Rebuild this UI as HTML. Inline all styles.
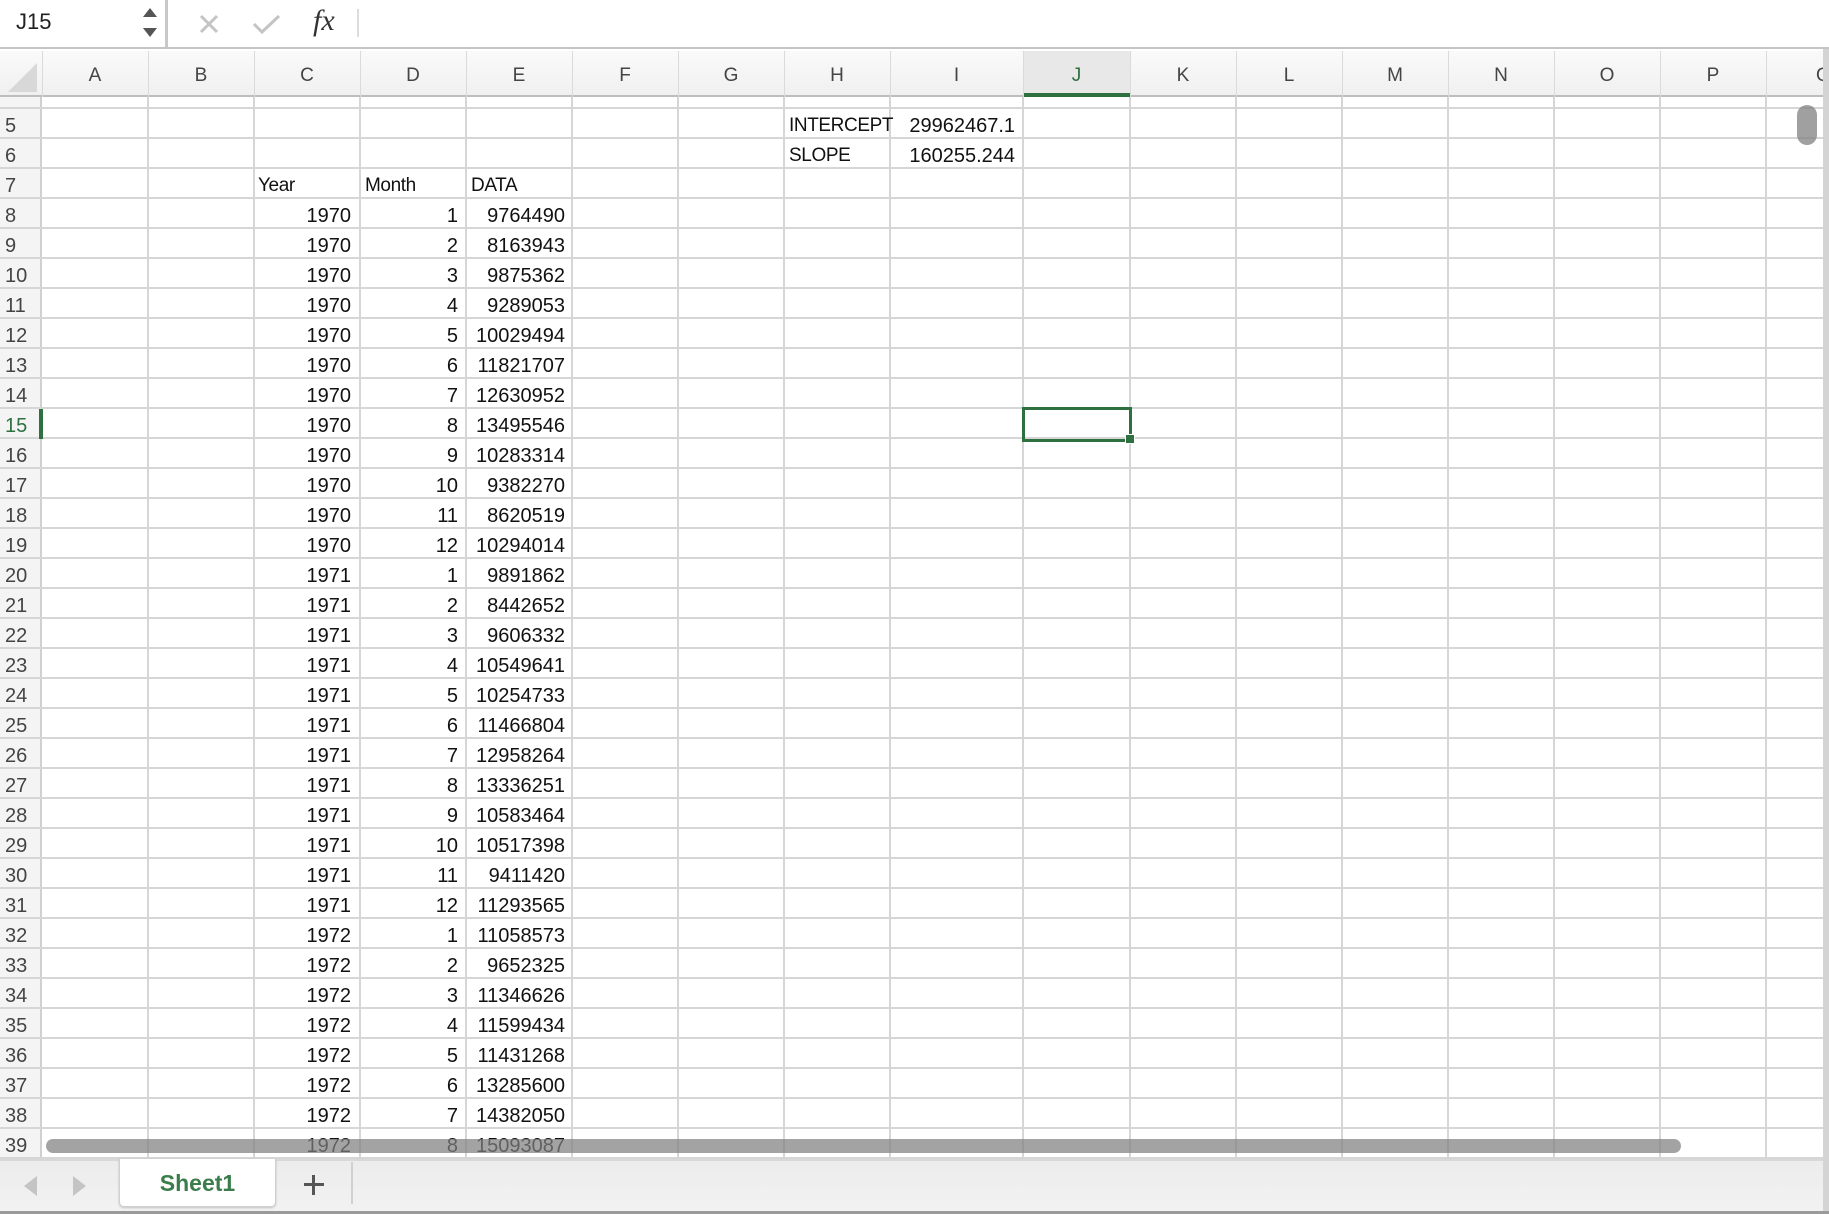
<!DOCTYPE html>
<html><head><meta charset="utf-8"><style>
*{margin:0;padding:0;box-sizing:border-box}
body{width:1829px;height:1214px;overflow:hidden;background:#fff;font-family:"Liberation Sans",sans-serif;position:relative}
.abs{position:absolute}
#tb{left:0;top:0;width:1829px;height:49px;background:#fff;border-bottom:2px solid #c4c4c4}
#hdr{left:0;top:51px;width:1829px;height:46px;background:linear-gradient(#fafafa,#f0f0f0);border-bottom:2px solid #bdbdbd}
.hl{position:absolute;top:2px;height:46px;line-height:46px;text-align:center;font-size:19px;color:#444}
.hs{position:absolute;top:0;width:1px;height:46px;background:#dadada}
#rn{left:0;top:97px;width:42px;height:1063px;background:#f4f4f4;border-right:2px solid #d0d0d0}
.vl{position:absolute;top:97px;width:2px;height:1063px;background:#d6d6d6}
.row{position:absolute;left:0;width:1823px;height:30px;border-bottom:2px solid #d6d6d6}
.row span{position:absolute;top:2px;line-height:30px;font-size:20px;color:#111;white-space:nowrap}
.row .n{left:5px;color:#444;font-size:20px}
.row .t{font-size:19px;letter-spacing:-0.4px}
.r{text-align:right}
</style></head><body>
<div id="tb" class="abs">
 <div class="abs" style="left:16px;top:9px;font-size:22px;color:#222">J15</div>
 <div class="abs" style="left:143px;top:8px;width:0;height:0;border-left:7px solid transparent;border-right:7px solid transparent;border-bottom:9px solid #555"></div>
 <div class="abs" style="left:143px;top:28px;width:0;height:0;border-left:7px solid transparent;border-right:7px solid transparent;border-top:9px solid #555"></div>
 <div class="abs" style="left:165px;top:0;width:3px;height:47px;background:#c8c8c8"></div>
 <svg class="abs" style="left:198px;top:13px" width="22" height="22"><path d="M3 3L19 19M19 3L3 19" stroke="#c4c4c4" stroke-width="3"/></svg>
 <svg class="abs" style="left:252px;top:13px" width="30" height="22"><path d="M2 11L10 19L27 3" stroke="#c4c4c4" stroke-width="3" fill="none"/></svg>
 <div class="abs" style="left:313px;top:4px;font-family:'Liberation Serif',serif;font-style:italic;font-size:30px;color:#333">fx</div>
 <div class="abs" style="left:357px;top:9px;width:2px;height:28px;background:#ddd"></div>
</div>
<div id="hdr" class="abs">
 <svg class="abs" style="left:6px;top:12px" width="32" height="30"><path d="M31 0L31 29L2 29Z" fill="#d8d8d8"/></svg>
 <div class="hs" style="left:42px"></div>
 <div class="hl" style="left:42px;width:106px">A</div>
 <div class="hl" style="left:148px;width:106px">B</div>
 <div class="hl" style="left:254px;width:106px">C</div>
 <div class="hl" style="left:360px;width:106px">D</div>
 <div class="hl" style="left:466px;width:106px">E</div>
 <div class="hl" style="left:572px;width:106px">F</div>
 <div class="hl" style="left:678px;width:106px">G</div>
 <div class="hl" style="left:784px;width:106px">H</div>
 <div class="hl" style="left:890px;width:133px">I</div>
 <div class="hl" style="left:1023px;top:0;padding-top:2px;width:107px;background:#e8e8e8;color:#2f7040;border-bottom:4px solid #2f7040;height:46px">J</div>
 <div class="hl" style="left:1130px;width:106px">K</div>
 <div class="hl" style="left:1236px;width:106px">L</div>
 <div class="hl" style="left:1342px;width:106px">M</div>
 <div class="hl" style="left:1448px;width:106px">N</div>
 <div class="hl" style="left:1554px;width:106px">O</div>
 <div class="hl" style="left:1660px;width:106px">P</div>
 <div class="hl" style="left:1766px;width:106px;text-align:left;padding-left:50px">Q</div>
 <div class="hs" style="left:148px"></div><div class="hs" style="left:254px"></div><div class="hs" style="left:360px"></div><div class="hs" style="left:466px"></div><div class="hs" style="left:572px"></div><div class="hs" style="left:678px"></div><div class="hs" style="left:784px"></div><div class="hs" style="left:890px"></div><div class="hs" style="left:1023px"></div><div class="hs" style="left:1130px"></div><div class="hs" style="left:1236px"></div><div class="hs" style="left:1342px"></div><div class="hs" style="left:1448px"></div><div class="hs" style="left:1554px"></div><div class="hs" style="left:1660px"></div><div class="hs" style="left:1766px"></div>
</div>
<div id="rn" class="abs"></div>
<div class="vl" style="left:147px"></div><div class="vl" style="left:253px"></div><div class="vl" style="left:359px"></div><div class="vl" style="left:465px"></div><div class="vl" style="left:571px"></div><div class="vl" style="left:677px"></div><div class="vl" style="left:783px"></div><div class="vl" style="left:889px"></div><div class="vl" style="left:1022px"></div><div class="vl" style="left:1129px"></div><div class="vl" style="left:1235px"></div><div class="vl" style="left:1341px"></div><div class="vl" style="left:1447px"></div><div class="vl" style="left:1553px"></div><div class="vl" style="left:1659px"></div><div class="vl" style="left:1765px"></div>
<div class="row" style="top:97px;height:12px;overflow:hidden"><span class="n" style="top:-22px">4</span></div>
<div class="row" style="top:109px"><span class="t" style="left:789px">INTERCEPT</span><span class="n">5</span><span class="r" style="left:890px;width:125px">29962467.1</span></div>
<div class="row" style="top:139px"><span class="n">6</span><span class="t" style="left:789px">SLOPE</span><span class="r" style="left:890px;width:125px">160255.244</span></div>
<div class="row" style="top:169px"><span class="n">7</span><span class="t" style="left:258px">Year</span><span class="t" style="left:365px">Month</span><span class="t" style="left:471px">DATA</span></div>
<div class="row" style="top:199px"><span class="n">8</span><span class="r" style="left:254px;width:97px">1970</span><span class="r" style="left:360px;width:98px">1</span><span class="r" style="left:466px;width:99px">9764490</span></div>
<div class="row" style="top:229px"><span class="n">9</span><span class="r" style="left:254px;width:97px">1970</span><span class="r" style="left:360px;width:98px">2</span><span class="r" style="left:466px;width:99px">8163943</span></div>
<div class="row" style="top:259px"><span class="n">10</span><span class="r" style="left:254px;width:97px">1970</span><span class="r" style="left:360px;width:98px">3</span><span class="r" style="left:466px;width:99px">9875362</span></div>
<div class="row" style="top:289px"><span class="n">11</span><span class="r" style="left:254px;width:97px">1970</span><span class="r" style="left:360px;width:98px">4</span><span class="r" style="left:466px;width:99px">9289053</span></div>
<div class="row" style="top:319px"><span class="n">12</span><span class="r" style="left:254px;width:97px">1970</span><span class="r" style="left:360px;width:98px">5</span><span class="r" style="left:466px;width:99px">10029494</span></div>
<div class="row" style="top:349px"><span class="n">13</span><span class="r" style="left:254px;width:97px">1970</span><span class="r" style="left:360px;width:98px">6</span><span class="r" style="left:466px;width:99px">11821707</span></div>
<div class="row" style="top:379px"><span class="n">14</span><span class="r" style="left:254px;width:97px">1970</span><span class="r" style="left:360px;width:98px">7</span><span class="r" style="left:466px;width:99px">12630952</span></div>
<div class="row" style="top:409px"><span class="n" style="color:#2f7040">15</span><span style="left:39px;top:0;width:4px;height:30px;background:#2f7040"></span><span class="r" style="left:254px;width:97px">1970</span><span class="r" style="left:360px;width:98px">8</span><span class="r" style="left:466px;width:99px">13495546</span></div>
<div class="row" style="top:439px"><span class="n">16</span><span class="r" style="left:254px;width:97px">1970</span><span class="r" style="left:360px;width:98px">9</span><span class="r" style="left:466px;width:99px">10283314</span></div>
<div class="row" style="top:469px"><span class="n">17</span><span class="r" style="left:254px;width:97px">1970</span><span class="r" style="left:360px;width:98px">10</span><span class="r" style="left:466px;width:99px">9382270</span></div>
<div class="row" style="top:499px"><span class="n">18</span><span class="r" style="left:254px;width:97px">1970</span><span class="r" style="left:360px;width:98px">11</span><span class="r" style="left:466px;width:99px">8620519</span></div>
<div class="row" style="top:529px"><span class="n">19</span><span class="r" style="left:254px;width:97px">1970</span><span class="r" style="left:360px;width:98px">12</span><span class="r" style="left:466px;width:99px">10294014</span></div>
<div class="row" style="top:559px"><span class="n">20</span><span class="r" style="left:254px;width:97px">1971</span><span class="r" style="left:360px;width:98px">1</span><span class="r" style="left:466px;width:99px">9891862</span></div>
<div class="row" style="top:589px"><span class="n">21</span><span class="r" style="left:254px;width:97px">1971</span><span class="r" style="left:360px;width:98px">2</span><span class="r" style="left:466px;width:99px">8442652</span></div>
<div class="row" style="top:619px"><span class="n">22</span><span class="r" style="left:254px;width:97px">1971</span><span class="r" style="left:360px;width:98px">3</span><span class="r" style="left:466px;width:99px">9606332</span></div>
<div class="row" style="top:649px"><span class="n">23</span><span class="r" style="left:254px;width:97px">1971</span><span class="r" style="left:360px;width:98px">4</span><span class="r" style="left:466px;width:99px">10549641</span></div>
<div class="row" style="top:679px"><span class="n">24</span><span class="r" style="left:254px;width:97px">1971</span><span class="r" style="left:360px;width:98px">5</span><span class="r" style="left:466px;width:99px">10254733</span></div>
<div class="row" style="top:709px"><span class="n">25</span><span class="r" style="left:254px;width:97px">1971</span><span class="r" style="left:360px;width:98px">6</span><span class="r" style="left:466px;width:99px">11466804</span></div>
<div class="row" style="top:739px"><span class="n">26</span><span class="r" style="left:254px;width:97px">1971</span><span class="r" style="left:360px;width:98px">7</span><span class="r" style="left:466px;width:99px">12958264</span></div>
<div class="row" style="top:769px"><span class="n">27</span><span class="r" style="left:254px;width:97px">1971</span><span class="r" style="left:360px;width:98px">8</span><span class="r" style="left:466px;width:99px">13336251</span></div>
<div class="row" style="top:799px"><span class="n">28</span><span class="r" style="left:254px;width:97px">1971</span><span class="r" style="left:360px;width:98px">9</span><span class="r" style="left:466px;width:99px">10583464</span></div>
<div class="row" style="top:829px"><span class="n">29</span><span class="r" style="left:254px;width:97px">1971</span><span class="r" style="left:360px;width:98px">10</span><span class="r" style="left:466px;width:99px">10517398</span></div>
<div class="row" style="top:859px"><span class="n">30</span><span class="r" style="left:254px;width:97px">1971</span><span class="r" style="left:360px;width:98px">11</span><span class="r" style="left:466px;width:99px">9411420</span></div>
<div class="row" style="top:889px"><span class="n">31</span><span class="r" style="left:254px;width:97px">1971</span><span class="r" style="left:360px;width:98px">12</span><span class="r" style="left:466px;width:99px">11293565</span></div>
<div class="row" style="top:919px"><span class="n">32</span><span class="r" style="left:254px;width:97px">1972</span><span class="r" style="left:360px;width:98px">1</span><span class="r" style="left:466px;width:99px">11058573</span></div>
<div class="row" style="top:949px"><span class="n">33</span><span class="r" style="left:254px;width:97px">1972</span><span class="r" style="left:360px;width:98px">2</span><span class="r" style="left:466px;width:99px">9652325</span></div>
<div class="row" style="top:979px"><span class="n">34</span><span class="r" style="left:254px;width:97px">1972</span><span class="r" style="left:360px;width:98px">3</span><span class="r" style="left:466px;width:99px">11346626</span></div>
<div class="row" style="top:1009px"><span class="n">35</span><span class="r" style="left:254px;width:97px">1972</span><span class="r" style="left:360px;width:98px">4</span><span class="r" style="left:466px;width:99px">11599434</span></div>
<div class="row" style="top:1039px"><span class="n">36</span><span class="r" style="left:254px;width:97px">1972</span><span class="r" style="left:360px;width:98px">5</span><span class="r" style="left:466px;width:99px">11431268</span></div>
<div class="row" style="top:1069px"><span class="n">37</span><span class="r" style="left:254px;width:97px">1972</span><span class="r" style="left:360px;width:98px">6</span><span class="r" style="left:466px;width:99px">13285600</span></div>
<div class="row" style="top:1099px"><span class="n">38</span><span class="r" style="left:254px;width:97px">1972</span><span class="r" style="left:360px;width:98px">7</span><span class="r" style="left:466px;width:99px">14382050</span></div>
<div class="row" style="top:1129px"><span class="n">39</span><span class="r" style="left:254px;width:97px">1972</span><span class="r" style="left:360px;width:98px">8</span><span class="r" style="left:466px;width:99px">15093087</span></div>
<!-- selection -->
<div class="abs" style="left:1022px;top:407px;width:110px;height:35px;border:3px solid #2f7040"></div>
<div class="abs" style="left:1125px;top:434px;width:10px;height:10px;background:#2f7040;border:1px solid #fff"></div>
<!-- scrollbars -->
<div class="abs" style="left:46px;top:1139px;width:1635px;height:14px;border-radius:7px;background:rgba(128,128,128,.72)"></div>
<div class="abs" style="left:1797px;top:105px;width:20px;height:40px;border-radius:10px;background:rgba(128,128,128,.75)"></div>
<div class="abs" style="left:1823px;top:49px;width:6px;height:1165px;background:#d4d4d4"></div>
<!-- tab bar -->
<div class="abs" style="left:0;top:1159px;width:1823px;height:53px;background:linear-gradient(#ececec,#f2f2f2);border-top:2px solid #d8d8d8"></div>
<div class="abs" style="left:0;top:1211px;width:1829px;height:3px;background:#9a9a9a"></div>
<div class="abs" style="left:24px;top:1176px;width:0;height:0;border-top:10px solid transparent;border-bottom:10px solid transparent;border-right:13px solid #c4c4c4"></div>
<div class="abs" style="left:73px;top:1176px;width:0;height:0;border-top:10px solid transparent;border-bottom:10px solid transparent;border-left:13px solid #c4c4c4"></div>
<div class="abs" style="left:119px;top:1159px;width:157px;height:48px;background:#fff;border:1px solid #d0d0d0;border-top:none;border-radius:0 0 5px 5px;box-shadow:0 1px 2px rgba(0,0,0,.2);text-align:center;line-height:48px;font-size:23px;font-weight:bold;color:#3a7d4a">Sheet1</div>
<div class="abs" style="left:304px;top:1183px;width:20px;height:3px;background:#555"></div>
<div class="abs" style="left:312px;top:1175px;width:3px;height:20px;background:#555"></div>
<div class="abs" style="left:351px;top:1162px;width:2px;height:42px;background:#d0d0d0"></div>
</body></html>
